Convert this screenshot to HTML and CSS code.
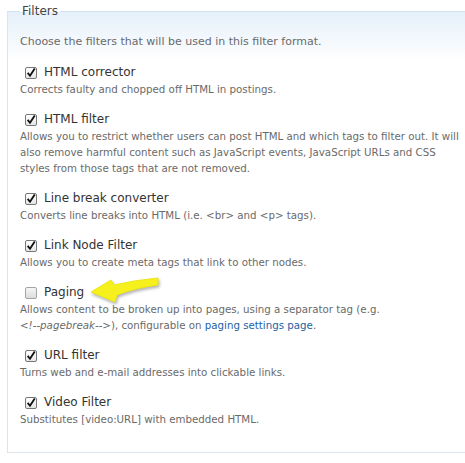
FILE: index.html
```html
<!DOCTYPE html>
<html lang="en">
<head>
  <meta charset="UTF-8">
  <title>Filters</title>
  <link rel="stylesheet" href="styles.css">
</head>
<body>
  <fieldset class="filters">
    <legend>Filters</legend>
    <p class="intro">Choose the filters that will be used in this filter format.</p>

    <div class="filter">
      <label class="filter-name"><span class="check on"><svg viewBox="0 0 12 12"><path d="M2 5.8 L4.8 9.3 L10.5 0.5"/></svg></span>HTML corrector</label>
      <p class="desc">Corrects faulty and chopped off HTML in postings.</p>
    </div>

    <div class="filter">
      <label class="filter-name"><span class="check on"><svg viewBox="0 0 12 12"><path d="M2 5.8 L4.8 9.3 L10.5 0.5"/></svg></span>HTML filter</label>
      <p class="desc">Allows you to restrict whether users can post HTML and which tags to filter out. It will also remove harmful content such as JavaScript events, JavaScript URLs and CSS styles from those tags that are not removed.</p>
    </div>

    <div class="filter">
      <label class="filter-name"><span class="check on"><svg viewBox="0 0 12 12"><path d="M2 5.8 L4.8 9.3 L10.5 0.5"/></svg></span>Line break converter</label>
      <p class="desc">Converts line breaks into HTML (i.e. &lt;br&gt; and &lt;p&gt; tags).</p>
    </div>

    <div class="filter">
      <label class="filter-name"><span class="check on"><svg viewBox="0 0 12 12"><path d="M2 5.8 L4.8 9.3 L10.5 0.5"/></svg></span>Link Node Filter</label>
      <p class="desc">Allows you to create meta tags that link to other nodes.</p>
    </div>

    <div class="filter">
      <label class="filter-name"><span class="check"></span>Paging</label>
      <p class="desc">Allows content to be broken up into pages, using a separator tag (e.g. <em>&lt;!--pagebreak--&gt;</em>), configurable on <a href="#">paging settings page</a>.</p>
    </div>

    <div class="filter">
      <label class="filter-name"><span class="check on"><svg viewBox="0 0 12 12"><path d="M2 5.8 L4.8 9.3 L10.5 0.5"/></svg></span>URL filter</label>
      <p class="desc">Turns web and e-mail addresses into clickable links.</p>
    </div>

    <div class="filter">
      <label class="filter-name"><span class="check on"><svg viewBox="0 0 12 12"><path d="M2 5.8 L4.8 9.3 L10.5 0.5"/></svg></span>Video Filter</label>
      <p class="desc">Substitutes [video:URL] with embedded HTML.</p>
    </div>
  </fieldset>

  <!-- annotation arrow pointing at the unchecked filter -->
  <svg class="arrow" width="80" height="36" viewBox="0 0 80 36">
    <path d="M6 20 L26 8 L29 13 Q50 8 73 6 L73 13 Q50 16 32 23 L30 30 Z"/>
  </svg>
</body>
</html>
```
FILE: styles.css
```css
html, body {
  overflow: hidden;
}

body {
  margin: 0;
  font-family: "DejaVu Sans", Verdana, sans-serif;
  font-size: 11px;
  color: #6a6a6a;
  background: #fff;
}

.filters {
  width: 442px;
  margin: 4px 0 0 7px;
  padding: 16px 12px 25px;
  border: 1px solid #dde4ea;
  border-top-color: #d3e2f1;
  background: linear-gradient(#e5f0fa, #fff 50px);
}

.filters legend {
  padding: 0 2px;
  font-size: 12px;
  line-height: 14px;
  color: #444;
}

.intro {
  margin: 0 0 14px;
  line-height: 16px;
}

.filter {
  margin-bottom: 14px;
}

.filter:last-child {
  margin-bottom: 0;
}

.filter-name {
  display: flex;
  align-items: center;
  gap: 7px;
  padding-left: 5px;
  font-size: 12px;
  line-height: 17px;
  color: #333;
}

.check {
  box-sizing: border-box;
  width: 12px;
  height: 12px;
  border: 1px solid #a4a4a4;
  border-radius: 2px;
  background: linear-gradient(#f6f6f6, #dcdcdc);
}

.check.on {
  border-color: #777;
  background: linear-gradient(#fff, #e6e6e6);
}

.check svg {
  display: block;
  width: 10px;
  height: 10px;
  overflow: visible;
}

.check svg path {
  fill: none;
  stroke: #111;
  stroke-width: 2.2;
}

.desc {
  margin: 0;
  font-size: 10.25px;
  line-height: 16px;
}

.desc em {
  white-space: nowrap;
}

.desc a {
  color: #1d62a3;
  text-decoration: none;
}

.arrow {
  position: absolute;
  left: 85px;
  top: 272px;
  filter: drop-shadow(1px 2px 1.5px rgba(0, 0, 0, 0.3));
}

.arrow path {
  fill: #f6f01c;
  stroke: #ede61a;
  stroke-width: 1;
  stroke-linejoin: round;
}
```
